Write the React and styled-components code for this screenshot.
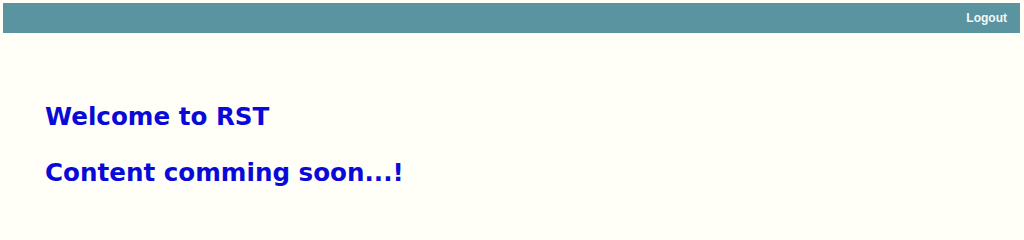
import React from "react";
import styled, { createGlobalStyle } from "styled-components";

const GlobalStyle = createGlobalStyle`
  html, body {
    margin: 0;
    padding: 0;
    background: #fffff8;
  }
  body {
    padding: 3px 4px 0 3px;
    font-family: "DejaVu Sans", Verdana, sans-serif;
  }
`;

const NavBar = styled.nav`
  display: flex;
  justify-content: flex-end;
  align-items: center;
  height: 30px;
  padding: 0 13px;
  background: #5a94a0;
`;

const NavLink = styled.a`
  color: #f4f8f8;
  font-family: "Liberation Sans", Arial, sans-serif;
  font-size: 12px;
  font-weight: bold;
  text-decoration: none;
  cursor: pointer;
`;

const Main = styled.main`
  padding: 68px 0 0 42px;
`;

const Heading = styled.h2`
  margin: 0 0 ${(p) => p.gap || 0}px;
  color: #0a0ad8;
  font-size: 24.6px;
  font-weight: bold;
  line-height: 32px;
`;

export default function App() {
  return (
    <>
      <GlobalStyle />
      <NavBar>
        <NavLink>Logout</NavLink>
      </NavBar>
      <Main>
        <Heading gap={24}>Welcome to RST</Heading>
        <Heading>Content comming soon...!</Heading>
      </Main>
    </>
  );
}
